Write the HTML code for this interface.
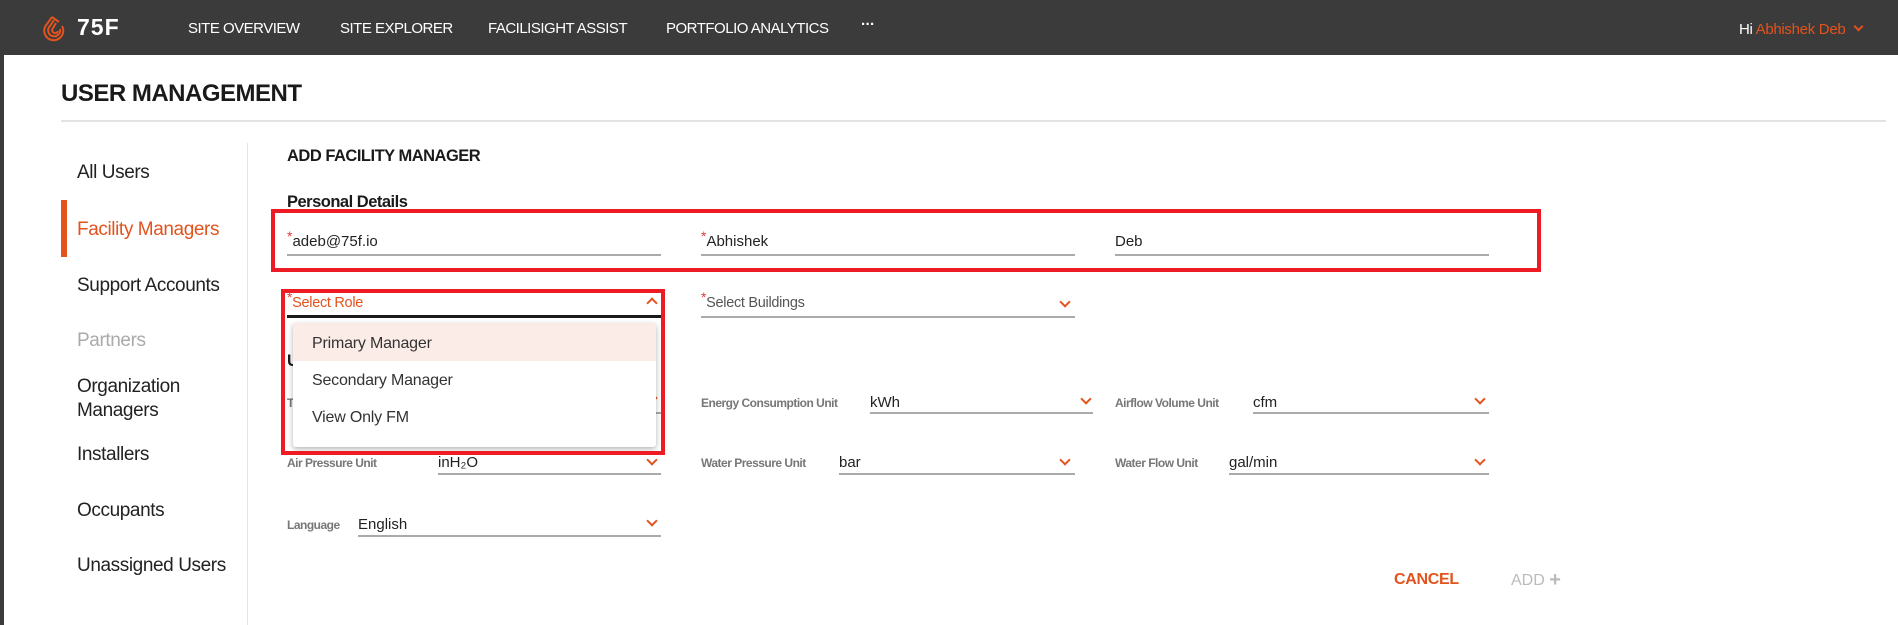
<!DOCTYPE html>
<html><head><meta charset="utf-8"><style>
*{margin:0;padding:0;box-sizing:border-box}
body{width:1898px;height:625px;position:relative;overflow:hidden;background:#fff;font-family:"Liberation Sans",sans-serif;color:#222}
.a{position:absolute;white-space:nowrap}
.nav{position:absolute;left:0;top:0;width:1898px;height:55px;background:#3b3b3b}
.ni{position:absolute;top:20px;color:#fff;font-size:15px;letter-spacing:-0.5px}
.side{position:absolute;left:77px;font-size:19px;color:#222;letter-spacing:-0.4px}
.ul{position:absolute;height:1px;background:#999}
.lbl{position:absolute;font-size:12px;font-weight:bold;color:#777;letter-spacing:-0.5px}
.val{position:absolute;font-size:15px;color:#222}
.chev{position:absolute;width:8px;height:8px;border-right:2px solid #e2531d;border-bottom:2px solid #e2531d;transform:rotate(45deg)}
.star{color:#e23a3a;font-size:14px;position:relative;top:-5px}
.red{position:absolute;border:4px solid #ed1c24}
</style></head><body>
<div class="nav">
<svg class="a" style="left:43px;top:15px" width="24" height="29" viewBox="0 0 24 29" fill="none" stroke="#e2531d" stroke-width="2"><path d="M9 2 L4 9 A9.5 9.5 0 1 0 19 11"/><path d="M11 5 L7 11 A6 6 0 1 0 17 14"/><path d="M13 8 L10 13 A3 3 0 1 0 15 16"/><path d="M9 2 L16 7"/></svg>
<div class="a" style="left:77px;top:14px;color:#fff;font-size:23px;font-weight:bold;letter-spacing:1px">75F</div>
<div class="ni" style="left:188px">SITE OVERVIEW</div>
<div class="ni" style="left:340px">SITE EXPLORER</div>
<div class="ni" style="left:488px">FACILISIGHT ASSIST</div>
<div class="ni" style="left:666px">PORTFOLIO ANALYTICS</div>
<div class="ni" style="left:861px;top:16px;font-weight:bold">···</div>
<div class="a" style="left:1739px;top:21px;font-size:15px;color:#fff;letter-spacing:-0.3px">Hi <span style="color:#e2531d">Abhishek Deb</span></div>
<div class="chev" style="left:1855px;top:23px;width:7px;height:7px"></div>
</div>
<div class="a" style="left:0;top:55px;width:4px;height:570px;background:#3b3b3b"></div>
<div class="a" style="left:61px;top:80px;font-size:24px;font-weight:bold;color:#1a1a1a;letter-spacing:-0.5px">USER MANAGEMENT</div>
<div class="a" style="left:61px;top:120px;width:1825px;height:2px;background:#e3e3e3"></div>
<div class="a" style="left:247px;top:143px;width:1px;height:482px;background:#e3e3e3"></div>
<div class="a" style="left:61px;top:200px;width:6px;height:57px;background:#e2531d"></div>
<div class="side" style="top:162px">All Users</div>
<div class="side" style="top:219px;color:#e2531d">Facility Managers</div>
<div class="side" style="top:275px">Support Accounts</div>
<div class="side" style="top:330px;color:#aaa">Partners</div>
<div class="side" style="top:375px;line-height:24px">Organization<br>Managers</div>
<div class="side" style="top:444px">Installers</div>
<div class="side" style="top:500px">Occupants</div>
<div class="side" style="top:555px">Unassigned Users</div>

<div class="a" style="left:287px;top:147px;font-size:16.5px;font-weight:bold;color:#1a1a1a;letter-spacing:-0.5px">ADD FACILITY MANAGER</div>
<div class="a" style="left:287px;top:193px;font-size:16.5px;font-weight:bold;color:#1a1a1a;letter-spacing:-0.5px">Personal Details</div>
<div class="a" style="left:287px;top:352px;font-size:16.5px;font-weight:bold;color:#1a1a1a">User Preferences</div>

<div class="val" style="left:287px;top:233px"><span class="star">*</span>adeb@75f.io</div>
<div class="ul" style="left:287px;top:254px;width:374px;height:2px;background:#aaa"></div>
<div class="val" style="left:701px;top:233px"><span class="star">*</span>Abhishek</div>
<div class="ul" style="left:701px;top:254px;width:374px;height:2px;background:#aaa"></div>
<div class="val" style="left:1115px;top:233px">Deb</div>
<div class="ul" style="left:1115px;top:254px;width:374px;height:2px;background:#aaa"></div>
<div class="red" style="left:271px;top:209px;width:1270px;height:63px"></div>

<div class="val" style="left:287px;top:294px;color:#e2531d;font-size:14.5px;letter-spacing:-0.3px"><span class="star">*</span>Select Role</div>
<div class="chev" style="left:648px;top:299px;transform:rotate(-135deg)"></div>
<div class="a" style="left:287px;top:315px;width:374px;height:3px;background:#1a1a1a"></div>
<div class="val" style="left:701px;top:294px;color:#555;font-size:14.5px;letter-spacing:-0.3px"><span class="star">*</span>Select Buildings</div>
<div class="chev" style="left:1061px;top:298px"></div>
<div class="ul" style="left:701px;top:316px;width:374px;height:2px;background:#aaa"></div>

<div class="lbl" style="left:287px;top:396px">Temperature Unit</div>
<div class="chev" style="left:648px;top:394px"></div>
<div class="ul" style="left:440px;top:412px;width:221px;height:2px;background:#aaa"></div>
<div class="lbl" style="left:701px;top:396px">Energy Consumption Unit</div>
<div class="val" style="left:870px;top:394px">kWh</div>
<div class="chev" style="left:1082px;top:395px"></div>
<div class="ul" style="left:870px;top:412px;width:223px;height:2px;background:#aaa"></div>
<div class="lbl" style="left:1115px;top:396px">Airflow Volume Unit</div>
<div class="val" style="left:1253px;top:394px">cfm</div>
<div class="chev" style="left:1476px;top:395px"></div>
<div class="ul" style="left:1253px;top:412px;width:236px;height:2px;background:#aaa"></div>

<div class="lbl" style="left:287px;top:456px">Air Pressure Unit</div>
<div class="val" style="left:438px;top:454px">inH₂O</div>
<div class="chev" style="left:648px;top:456px"></div>
<div class="ul" style="left:438px;top:473px;width:223px;height:2px;background:#aaa"></div>
<div class="lbl" style="left:701px;top:456px">Water Pressure Unit</div>
<div class="val" style="left:839px;top:454px">bar</div>
<div class="chev" style="left:1061px;top:456px"></div>
<div class="ul" style="left:839px;top:473px;width:236px;height:2px;background:#aaa"></div>
<div class="lbl" style="left:1115px;top:456px">Water Flow Unit</div>
<div class="val" style="left:1229px;top:454px">gal/min</div>
<div class="chev" style="left:1476px;top:456px"></div>
<div class="ul" style="left:1229px;top:473px;width:260px;height:2px;background:#aaa"></div>

<div class="lbl" style="left:287px;top:518px">Language</div>
<div class="val" style="left:358px;top:516px">English</div>
<div class="chev" style="left:648px;top:517px"></div>
<div class="ul" style="left:358px;top:535px;width:303px;height:2px;background:#aaa"></div>

<div class="a" style="left:293px;top:323px;width:363px;height:124px;background:#fff;box-shadow:0 2px 6px rgba(0,0,0,.3);border-radius:3px;font-size:16px;color:#333;letter-spacing:-0.2px">
<div style="height:38px;background:#fbece7;padding:12px 0 0 19px">Primary Manager</div>
<div style="height:37px;padding:11px 0 0 19px">Secondary Manager</div>
<div style="height:37px;padding:11px 0 0 19px">View Only FM</div>
</div>
<div class="red" style="left:281px;top:289px;width:384px;height:166px"></div>

<div class="a" style="left:1394px;top:571px;font-size:16px;font-weight:bold;color:#e2531d;letter-spacing:-0.3px">CANCEL</div>
<div class="a" style="left:1511px;top:568px;font-size:16px;color:#bbb">ADD <b style="font-size:20px;position:relative;top:1px">+</b></div>
</body></html>
